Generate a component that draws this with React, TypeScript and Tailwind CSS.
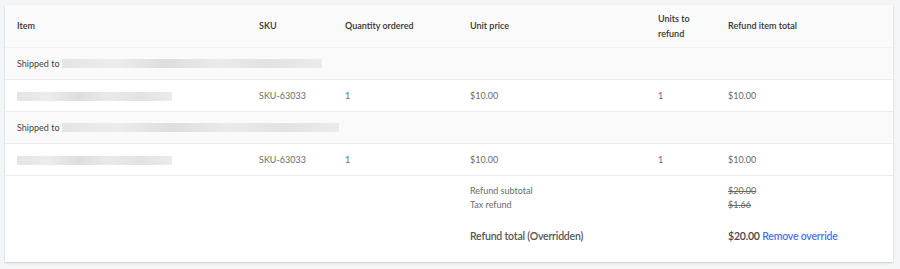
import React from "react";

const cols = "grid grid-cols-[242px_86px_125px_188px_70px_1fr] px-3";

function Redacted({ w }: { w: number }) {
  return (
    <span
      className="inline-block h-[9px] align-middle bg-[linear-gradient(90deg,#e4e4e4_0%,#ececec_20%,#dedede_40%,#eaeaea_60%,#e2e2e2_80%,#ebebeb_100%)] blur-[0.6px]"
      style={{ width: w }}
    />
  );
}

function ShipRow({ w }: { w: number }) {
  return (
    <div className="h-[32px] flex items-center px-3 bg-[#fafafa] border-b border-[#ececec] text-[9px] text-[#444]">
      <span className="mr-[3px]">Shipped to</span>
      <Redacted w={w} />
    </div>
  );
}

function ItemRow({ w }: { w: number }) {
  return (
    <div className={`${cols} h-[32px] items-center bg-white border-b border-[#ececec] text-[9px] text-[#6a6a6a]`}>
      <div>
        <Redacted w={w} />
      </div>
      <div>SKU-63033</div>
      <div>1</div>
      <div>$10.00</div>
      <div>1</div>
      <div>$10.00</div>
    </div>
  );
}

export default function App() {
  return (
    <div className="w-[900px] h-[269px] bg-[#f4f5f7] p-[5px] pr-[7px] font-['Lato','Noto_Sans',sans-serif]">
      <div className="bg-white shadow-[0_1px_2px_rgba(0,0,0,0.18)] h-[257px]">
        <div className={`${cols} h-[43px] items-center bg-[#fafafa] border-b border-[#f2f2f2] text-[9px] font-semibold text-[#333]`}>
          <div>Item</div>
          <div>SKU</div>
          <div>Quantity ordered</div>
          <div>Unit price</div>
          <div className="pr-[22px] leading-[15px]">Units to refund</div>
          <div>Refund item total</div>
        </div>

        <ShipRow w={260} />
        <ItemRow w={155} />
        <ShipRow w={277} />
        <ItemRow w={155} />

        <div className={`${cols} pt-[8px] text-[9px] text-[#6a6a6a]`}>
          <div className="col-span-3" />
          <div className="col-span-2 flex flex-col leading-[14px]">
            <span>Refund subtotal</span>
            <span>Tax refund</span>
            <span className="mt-[17px] text-[10.5px] tracking-[-0.2px] font-semibold text-[#555]">Refund total (Overridden)</span>
          </div>
          <div className="flex flex-col leading-[14px]">
            <span className="line-through">$20.00</span>
            <span className="line-through">$1.66</span>
            <span className="mt-[17px] text-[10.5px] tracking-[-0.2px] font-semibold text-[#444]">
              $20.00 <a href="#" className="text-[#4a70e8]">Remove override</a>
            </span>
          </div>
        </div>
      </div>
    </div>
  );
}
